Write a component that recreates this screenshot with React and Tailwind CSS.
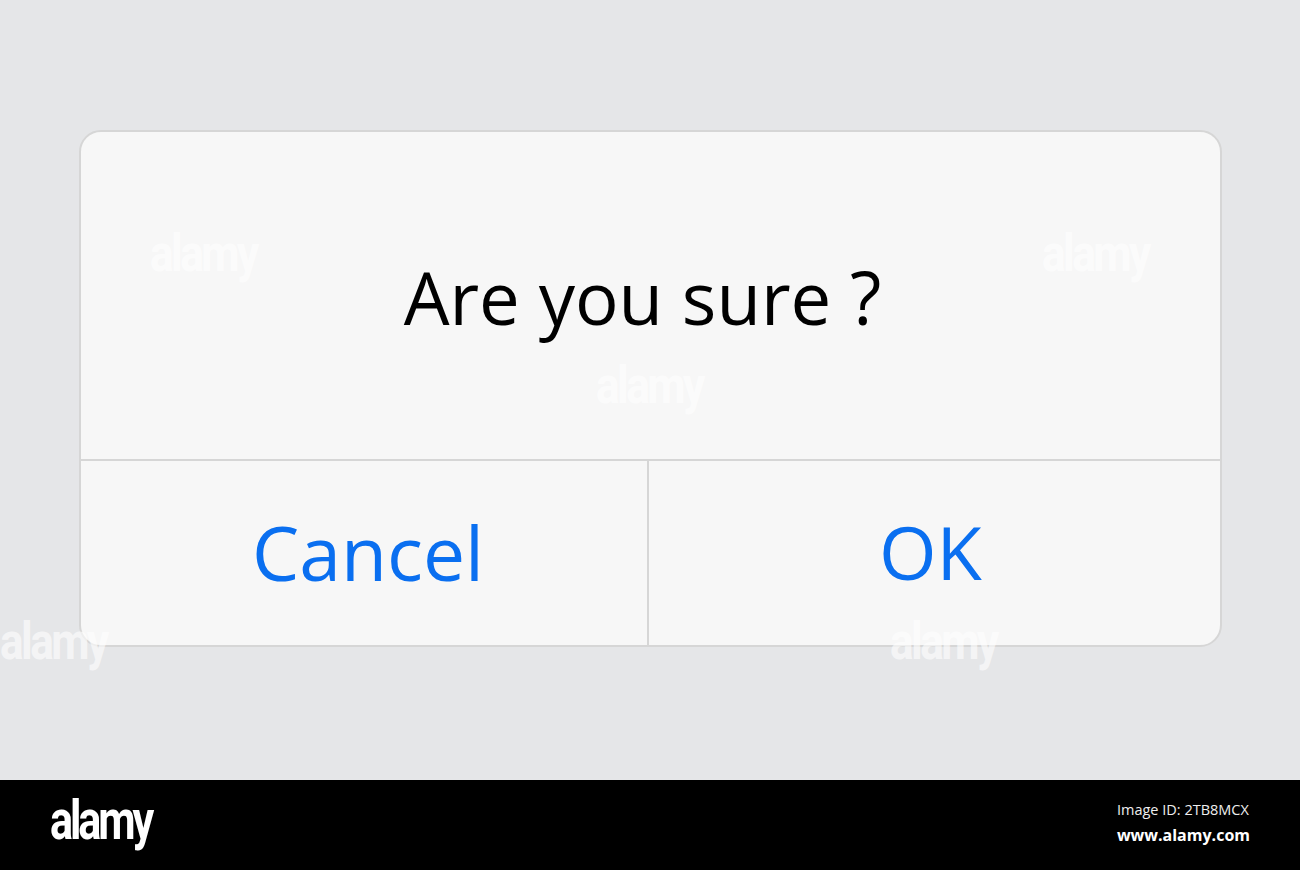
import React from "react";

const marks = [
  { x: 150, y: 228 },
  { x: 1042, y: 228 },
  { x: 596, y: 360 },
  { x: 0, y: 616 },
  { x: 890, y: 616 },
];

const Watermarks = () => (
  <div className="pointer-events-none absolute inset-0 overflow-hidden">
    {marks.map((m, i) => (
      <span
        key={i}
        className="absolute origin-left scale-x-[0.85] text-[52px] font-bold tracking-[-3px] text-white/60 leading-none font-['Roboto',sans-serif]"
        style={{ left: m.x, top: m.y }}
      >
        alamy
      </span>
    ))}
  </div>
);

export default function App() {
  return (
    <div className="w-[1300px] h-[870px] flex flex-col bg-[#e5e6e8] font-['Open_Sans',sans-serif]">
      <div className="relative h-[780px] pt-[130px] pl-[79px]">
        <div className="w-[1143px] h-[517px] rounded-[22px] border-2 border-[#d6d6d6] bg-[#f7f7f7] flex flex-col overflow-hidden">
          <div className="h-[329px] flex items-center justify-center border-b-2 border-[#d6d6d6]">
            <span className="text-[72.5px] text-black leading-none pt-[4px] pr-[16px]">Are you sure ?</span>
          </div>
          <div className="flex-1 flex">
            <button className="w-[568px] flex items-center justify-center border-r-2 border-[#d6d6d6] text-[#0a6ff0] text-[75px] leading-none pb-[2px] pl-[8px]">
              Cancel
            </button>
            <button className="flex-1 flex items-center justify-center text-[#0a6ff0] text-[74px] leading-none pb-[2px] pr-[8px]">
              OK
            </button>
          </div>
        </div>
        <Watermarks />
      </div>
      <div className="h-[90px] bg-black flex items-center justify-between pl-[50px] pr-[50px]">
        <span className="text-white origin-left scale-x-[0.77] text-[56px] font-bold tracking-[-4px] leading-none pb-[10px] font-['Roboto',sans-serif]">
          alamy
        </span>
        <div className="flex flex-col items-start text-white leading-none gap-[9px] pb-[4px]">
          <span className="text-[14.5px] text-[#eeeeee]">Image ID: 2TB8MCX</span>
          <span className="text-[16px] font-bold">www.alamy.com</span>
        </div>
      </div>
    </div>
  );
}
